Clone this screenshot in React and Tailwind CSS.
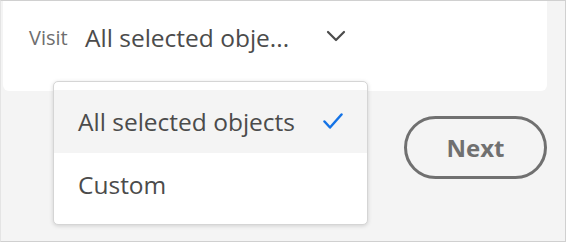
import React from "react";

function Chevron() {
  return (
    <svg width="20" height="12" viewBox="0 0 20 12" className="mb-[4px] shrink-0" fill="none">
      <path d="M2 2 L10 10 L18 2" stroke="#4b4b4b" strokeWidth="2.2" strokeLinecap="round" strokeLinejoin="round" />
    </svg>
  );
}

function Check() {
  return (
    <svg width="20" height="17" viewBox="0 0 20 17" fill="none" className="shrink-0">
      <path d="M1.5 8.5 L7 14.5 L18.5 1.5" stroke="#1473e6" strokeWidth="2.5" strokeLinecap="round" strokeLinejoin="round" />
    </svg>
  );
}

export default function App() {
  return (
    <div className="w-[567px] h-[243px] bg-white" style={{ fontFamily: '"Open Sans", sans-serif' }}>
      <div className="relative w-[566px] h-[242px] bg-[#f4f4f4] border border-[#d0d0d0] border-l-[#e4e4e4]">
        <div className="ml-[2px] w-[544px] h-[90px] bg-white rounded-b-[6px] pt-[21px] pl-[26px]">
          <div className="flex items-center h-[32px]">
            <span className="text-[20px] leading-[32px] text-[#6e6e6e] w-[56px]">Visit</span>
            <span className="text-[24.5px] leading-[32px] text-[#4b4b4b] w-[241px] whitespace-nowrap">All selected obje...</span>
            <Chevron />
          </div>
        </div>
        <div className="ml-[2px] w-[544px] mt-[25px] flex justify-end">
          <button className="w-[143px] h-[63px] rounded-full border-[3px] border-[#707070] text-[#707070] font-bold text-[24px] leading-[32px] flex items-center justify-center">
            Next
          </button>
        </div>
        <div className="absolute left-[52px] top-[80px] w-[315px] h-[144px] bg-white border border-[#d5d5d5] rounded-[5px] py-[8px] shadow-[0_1px_4px_rgba(0,0,0,0.15)]">
          <div className="h-[63px] bg-[#f4f4f4] flex items-center justify-between pl-[24px] pr-[24px]">
            <span className="text-[24.5px] leading-[32px] text-[#4b4b4b] whitespace-nowrap">All selected objects</span>
            <Check />
          </div>
          <div className="h-[63px] flex items-center pl-[24px] pr-[24px]">
            <span className="text-[24.5px] leading-[32px] text-[#4b4b4b]">Custom</span>
          </div>
        </div>
      </div>
    </div>
  );
}
